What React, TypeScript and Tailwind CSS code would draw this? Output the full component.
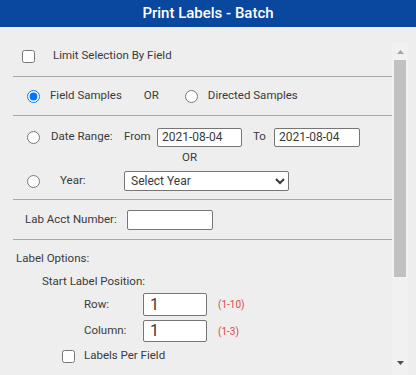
import React from 'react';

const font = { fontFamily: 'Roboto, "Liberation Sans", sans-serif' };

function Divider() {
  return <div className="h-px bg-[#a9a9a9]" />;
}

export default function App() {
  return (
    <div className="w-[416px] h-[375px] bg-[#eeeeee] text-[#3a3a3a] text-[11.5px] overflow-hidden" style={font}>
      <div className="h-[27px] bg-[#0a479e] flex items-center justify-center">
        <h1 className="text-white text-[15px] font-medium">Print Labels - Batch</h1>
      </div>

      <div className="flex pl-[13px] pr-[8px] pt-[16px] h-[348px]">
        <div className="flex-1 overflow-hidden">
          <div className="h-[33px] flex items-center pl-[9px] pb-[7px]">
            <input type="checkbox" className="m-0 w-[13px] h-[13px]" />
            <span className="ml-[18px]">Limit Selection By Field</span>
          </div>
          <Divider />

          <div className="h-[38px] flex items-center pl-[14px]">
            <input type="radio" name="kind" defaultChecked className="m-0 w-[13px] h-[13px]" />
            <span className="ml-[10px]">Field Samples</span>
            <span className="ml-[22px]">OR</span>
            <input type="radio" name="kind" className="m-0 ml-[26px] w-[13px] h-[13px]" />
            <span className="ml-[10px]">Directed Samples</span>
          </div>
          <Divider />

          <div className="h-[83px] pl-[14px] pt-[11px]">
            <div className="flex items-center h-[20px]">
              <input type="radio" name="range" className="m-0 w-[13px] h-[13px]" />
              <span className="ml-[11px] w-[73px]">Date Range:</span>
              <span className="w-[33px]">From</span>
              <input type="text" defaultValue="2021-08-04" className="w-[85px] h-[19px] bg-white border border-[#767676] rounded-[2px] px-[4px] text-[12px]" />
              <span className="ml-[11px] w-[21px]">To</span>
              <input type="text" defaultValue="2021-08-04" className="w-[86px] h-[19px] bg-white border border-[#767676] rounded-[2px] px-[4px] text-[12px]" />
            </div>
            <div className="h-[21px] flex items-center pl-[155px]">OR</div>
            <div className="flex items-center h-[20px] mt-[3px]">
              <input type="radio" name="range" className="m-0 w-[13px] h-[13px]" />
              <span className="ml-[20px] w-[64px]">Year:</span>
              <select className="w-[165px] h-[20px] bg-white border border-[#767676] rounded-[2px] text-[12px] pl-[2px]" style={font}>
                <option>Select Year</option>
              </select>
            </div>
          </div>
          <Divider />

          <div className="h-[39px] flex items-center pl-[12px]">
            <span className="w-[102px]">Lab Acct Number:</span>
            <input type="text" className="w-[86px] h-[20px] bg-white border border-[#767676] rounded-[2px]" />
          </div>
          <Divider />

          <div className="pl-[3px] pt-[11px]">
            <div className="h-[16px] flex items-center">Label Options:</div>
            <div className="h-[16px] flex items-center mt-[7px] pl-[26px]">Start Label Position:</div>
            <div className="pl-[68px] mt-[3px]">
              <div className="flex items-center h-[23px]">
                <span className="w-[59px]">Row:</span>
                <input type="text" defaultValue="1" className="w-[64px] h-[23px] bg-white border border-[#767676] rounded-[2px] px-[6px] text-[16px]" />
                <span className="ml-[11px] text-[10px] text-[#e04848]">(1-10)</span>
              </div>
              <div className="flex items-center h-[22px] mt-[4px]">
                <span className="w-[59px]">Column:</span>
                <input type="text" defaultValue="1" className="w-[64px] h-[22px] bg-white border border-[#767676] rounded-[2px] px-[6px] text-[16px]" />
                <span className="ml-[11px] text-[10px] text-[#e04848]">(1-3)</span>
              </div>
            </div>
            <div className="flex items-center h-[16px] mt-[6px] pl-[46px]">
              <input type="checkbox" className="m-0 w-[13px] h-[13px]" />
              <span className="ml-[9px]">Labels Per Field</span>
            </div>
          </div>
        </div>

        <div className="w-[16px] flex flex-col bg-[#f1f1f1]">
          <div className="h-[17px] flex items-center justify-center">
            <svg width="7" height="4" viewBox="0 0 7 4"><path d="M0 4 L3.5 0 L7 4 Z" fill="#a3a3a3" /></svg>
          </div>
          <div className="flex-1 px-[2px]">
            <div className="h-[217px] bg-[#c1c1c1]" />
          </div>
          <div className="h-[17px] flex items-center justify-center">
            <svg width="7" height="4" viewBox="0 0 7 4"><path d="M0 0 L3.5 4 L7 0 Z" fill="#505050" /></svg>
          </div>
          <div className="h-[4px]" />
        </div>
      </div>
    </div>
  );
}
